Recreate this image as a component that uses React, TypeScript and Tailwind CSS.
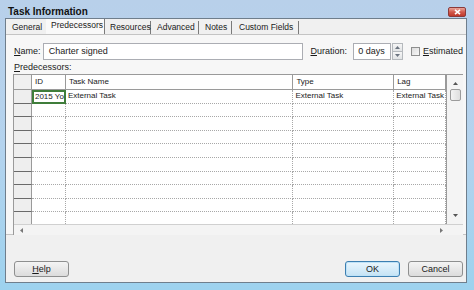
import React from 'react';

const tabs = [
  { label: 'General', width: 'w-[40px]', pad: 'pl-[6px]', sep: false },
  { label: 'Predecessors', width: 'w-[59px]', pad: 'pl-[5px]', sep: true },
  { label: 'Resources', width: 'w-[46px]', pad: 'pl-[5px]', sep: true },
  { label: 'Advanced', width: 'w-[48px]', pad: 'pl-[6px]', sep: true },
  { label: 'Notes', width: 'w-[33px]', pad: 'pl-[6px]', sep: true },
  { label: 'Custom Fields', width: 'w-[67px]', pad: 'pl-[7px]', sep: true },
];

const columns = [
  { key: 'id', label: 'ID', width: 'w-[34px]' },
  { key: 'name', label: 'Task Name', width: 'w-[228px]' },
  { key: 'type', label: 'Type', width: 'w-[101px]' },
  { key: 'lag', label: 'Lag', width: 'w-[52px]' },
];

const rows = [
  { id: '2015 Yo', name: 'External Task', type: 'External Task', lag: 'External Task' },
  ...Array.from({ length: 9 }, () => ({ id: '', name: '', type: '', lag: '' })),
];

function Underline({ ch, rest }: { ch: string; rest: string }) {
  return (
    <span>
      <span className="underline underline-offset-[1px]">{ch}</span>
      {rest}
    </span>
  );
}

function DialogButton({ children, primary }: { children: React.ReactNode; primary?: boolean }) {
  return (
    <button
      className={`w-[55px] h-[16px] rounded-[3px] text-[9px] leading-none flex items-center justify-center bg-gradient-to-b ${
        primary
          ? 'border border-[#3c7fb1] from-[#eaf6fd] to-[#c4e3f5] shadow-[inset_0_0_0_1px_#bfe2f7]'
          : 'border border-[#8e8f8f] from-[#f4f4f4] to-[#dcdcdc]'
      }`}
    >
      {children}
    </button>
  );
}

export default function App() {
  return (
    <div className="w-[474px] h-[290px] overflow-hidden flex flex-col bg-gradient-to-b from-[#b8d0ea] via-[#b4d3ee] to-[#9dd2ee] font-['Liberation_Sans',Arial,sans-serif] text-[#1a1a1a]">
      {/* Title bar */}
      <div className="h-[18px] flex items-start justify-between pl-[8px] pr-[8px] shrink-0">
        <span className="mt-[7px] text-[10px] font-bold leading-none text-[#111]">Task Information</span>
        <div className="mt-[7px] w-[18px] h-[10px] rounded-[2px] border border-[#8b3a3a] bg-gradient-to-b from-[#e8a59b] via-[#d2594c] to-[#c0392b] flex items-center justify-center">
          <svg width="7" height="6" viewBox="0 0 7 6">
            <path d="M1 0.8 L6 5.2 M6 0.8 L1 5.2" stroke="#fff" strokeWidth="1.6" />
          </svg>
        </div>
      </div>

      {/* Dialog body */}
      <div className="ml-[5px] mr-[7px] h-[265px] bg-[#f0f0f0] border border-[#6f7e8c] flex flex-col">
        {/* Tabs */}
        <div className="h-[15px] flex items-end text-[8.5px] leading-none">
          {tabs.map((t, i) => (
            <div
              key={t.label}
              className={`${t.width} ${t.pad} flex items-center ${
                i === 1 ? 'h-[15px] pb-[2px] bg-[#f9f9f9]' : 'h-[13px]'
              } ${t.sep ? 'border-r border-[#7a7a7a]' : ''}`}
            >
              {t.label}
            </div>
          ))}
        </div>

        {/* Tab page */}
        <div className="h-[201px] bg-[#f7f7f7] border-t border-b border-[#c4c4c4] flex flex-col pl-[7px] pr-[3px]">
          {/* Name row */}
          <div className="flex items-center h-[17px] mt-[8px] text-[9px]">
            <span className="w-[30px] pl-[1px]">
              <Underline ch="N" rest="ame:" />
            </span>
            <div className="w-[262px] h-[17px] bg-white border border-[#abadb3] flex items-center pl-[5px]">
              Charter signed
            </div>
            <span className="ml-[7px] w-[43px]">
              <Underline ch="D" rest="uration:" />
            </span>
            <div className="w-[38px] h-[17px] bg-white border border-[#abadb3] flex items-center pl-[4px]">
              0 days
            </div>
            <div className="ml-[1px] w-[11px] h-[17px] flex flex-col">
              <div className="flex-1 border border-[#b5b9bd] bg-gradient-to-b from-[#f6f6f6] to-[#e2e4e6] flex items-center justify-center">
                <svg width="5" height="3" viewBox="0 0 5 3"><path d="M0 3 L2.5 0 L5 3Z" fill="#6b7480" /></svg>
              </div>
              <div className="flex-1 border border-t-0 border-[#b5b9bd] bg-gradient-to-b from-[#f6f6f6] to-[#e2e4e6] flex items-center justify-center">
                <svg width="5" height="3" viewBox="0 0 5 3"><path d="M0 0 L2.5 3 L5 0Z" fill="#6b7480" /></svg>
              </div>
            </div>
            <div className="ml-[8px] w-[9px] h-[9px] border border-[#8e8f8f] bg-gradient-to-br from-[#dcdcdc] to-[#f8f8f8]" />
            <span className="ml-[3px]">
              <Underline ch="E" rest="stimated" />
            </span>
          </div>

          {/* Predecessors label */}
          <div className="mt-[2px] h-[11px] text-[9px] leading-[11px] pl-[1px]">
            <Underline ch="P" rest="redecessors:" />
          </div>

          {/* Grid */}
          <div className="mt-[1px] w-[450px] h-[161px] border-l border-t border-[#9a9a9a] bg-white flex flex-col text-[8px] leading-none">
            <div className="flex h-[149px]">
              <div className="w-[433px] flex flex-col overflow-hidden">
                {/* Header */}
                <div className="flex h-[15px] shrink-0 border-b border-[#9a9a9a]">
                  <div className="w-[18px] bg-[#f0f0f0] border-r border-[#9a9a9a]" />
                  {columns.map((c) => (
                    <div key={c.key} className={`${c.width} border-r border-[#9a9a9a] flex items-center pl-[3px] bg-white`}>
                      {c.label}
                    </div>
                  ))}
                </div>
                {/* Rows */}
                {rows.map((r, ri) => (
                  <div key={ri} className="flex h-[13.6px] shrink-0">
                    <div className="w-[18px] bg-[#eeeeee] border-r border-b border-r-[#9a9a9a] border-b-[#6a6a6a]" />
                    {columns.map((c) => {
                      const selected = ri === 0 && c.key === 'id';
                      return (
                        <div
                          key={c.key}
                          className={`${c.width} overflow-hidden whitespace-nowrap flex items-center ${
                            selected
                              ? 'border-2 border-[#3f7d3a] pl-[1px]'
                              : 'border-r border-b border-dotted border-[#a8a8a8] pl-[2px]'
                          }`}
                        >
                          {r[c.key as keyof typeof r]}
                        </div>
                      );
                    })}
                  </div>
                ))}
              </div>
              {/* Vertical scrollbar */}
              <div className="w-[17px] bg-[#f4f4f4] border-l border-[#9a9a9a] flex flex-col items-center">
                <svg className="mt-[7px]" width="5" height="3" viewBox="0 0 5 3"><path d="M0 3 L2.5 0 L5 3Z" fill="#555" /></svg>
                <div className="mt-[4px] w-[11px] h-[12px] rounded-[2px] border border-[#9b9b9b] bg-gradient-to-r from-[#f3f3f3] to-[#dedede]" />
                <div className="flex-1" />
                <svg className="mb-[7px]" width="5" height="3" viewBox="0 0 5 3"><path d="M0 0 L2.5 3 L5 0Z" fill="#555" /></svg>
              </div>
            </div>
            {/* Horizontal scrollbar */}
            <div className="h-[12px] bg-[#f4f4f4] border-t border-[#d0d0d0] flex items-center pl-[6px] pr-[20px] justify-between">
              <svg width="3" height="5" viewBox="0 0 3 5"><path d="M3 0 L0 2.5 L3 5Z" fill="#777" /></svg>
              <svg width="3" height="5" viewBox="0 0 3 5"><path d="M0 0 L3 2.5 L0 5Z" fill="#777" /></svg>
            </div>
          </div>
        </div>

        {/* Buttons */}
        <div className="flex items-center justify-between pl-[8px] pr-[3px] mt-[26px]">
          <DialogButton>
            <Underline ch="H" rest="elp" />
          </DialogButton>
          <div className="flex gap-[8px]">
            <DialogButton primary>OK</DialogButton>
            <DialogButton>Cancel</DialogButton>
          </div>
        </div>
      </div>
    </div>
  );
}
